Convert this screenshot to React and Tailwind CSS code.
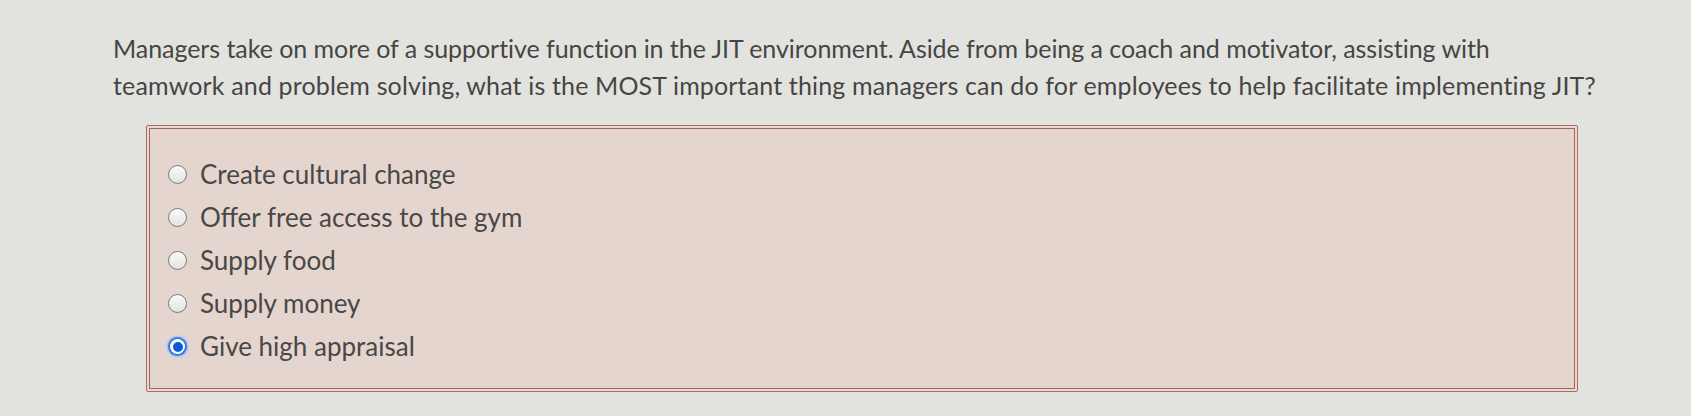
const options = [
  "Create cultural change",
  "Offer free access to the gym",
  "Supply food",
  "Supply money",
  "Give high appraisal",
];

function Radio({ checked }) {
  if (checked) {
    return (
      <span className="w-[19px] h-[19px] rounded-full bg-[#3a78e0] shadow-[0_0_0_1.5px_#a9c6f2] flex items-center justify-center shrink-0">
        <span className="w-[15px] h-[15px] rounded-full bg-white flex items-center justify-center">
          <span className="w-[10px] h-[10px] rounded-full bg-[#0b5ad9]" />
        </span>
      </span>
    );
  }
  return (
    <span className="w-[19px] h-[19px] rounded-full border-[1.5px] border-[#7a7a78] bg-gradient-to-b from-[#fbfbfa] to-[#e2e2df] shrink-0" />
  );
}

export default function App() {
  const selected = 4;
  return (
    <div
      className="w-[1691px] h-[416px] bg-[#e2e3de] px-[113px] pt-[30px] text-[#464544]"
      style={{ fontFamily: "Lato, 'Open Sans', sans-serif" }}
    >
      <p className="text-[25px] leading-[37px] whitespace-nowrap">
        <span className="block tracking-[-0.05px]">
          Managers take on more of a supportive function in the JIT environment. Aside from being a coach and motivator, assisting with
        </span>
        <span className="block tracking-[0.15px]">
          teamwork and problem solving, what is the MOST important thing managers can do for employees to help facilitate implementing JIT?
        </span>
      </p>

      <div className="ml-[33px] mt-[21px] border border-[#a06f66] rounded-[2px] bg-[#f1d6cf] p-[2px]">
        <div className="border border-[#9a6a61] bg-[#e4d6cf] pt-[24px] pb-[20px] pl-[18px]">
          {options.map((opt, i) => (
            <label key={opt} className="flex items-center gap-[13px] h-[43px] text-[26px] text-[#4a4746]">
              <Radio checked={i === selected} />
              <span>{opt}</span>
            </label>
          ))}
        </div>
      </div>
    </div>
  );
}
